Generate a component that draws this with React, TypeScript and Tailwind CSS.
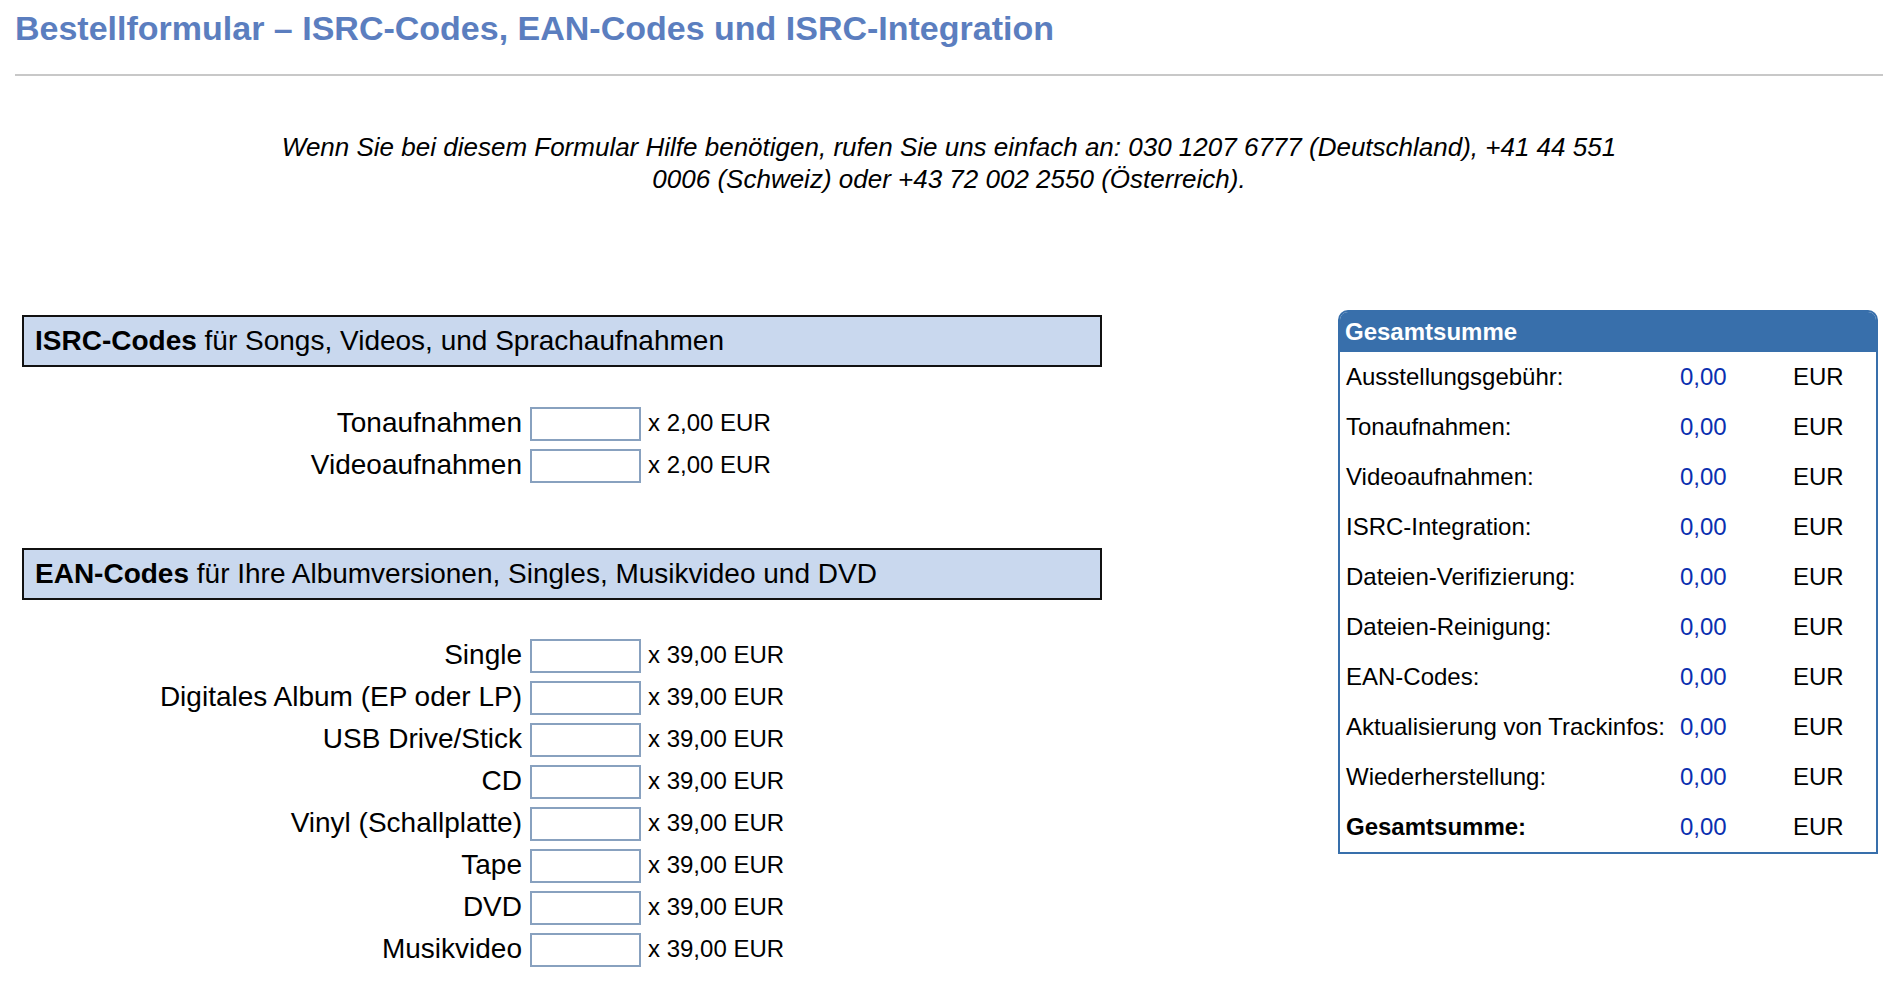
import React from 'react';

const isrcRows = [
  { label: 'Tonaufnahmen', price: '2,00' },
  { label: 'Videoaufnahmen', price: '2,00' },
];

const eanRows = [
  'Single',
  'Digitales Album (EP oder LP)',
  'USB Drive/Stick',
  'CD',
  'Vinyl (Schallplatte)',
  'Tape',
  'DVD',
  'Musikvideo',
];

const summaryRows = [
  'Ausstellungsgebühr:',
  'Tonaufnahmen:',
  'Videoaufnahmen:',
  'ISRC-Integration:',
  'Dateien-Verifizierung:',
  'Dateien-Reinigung:',
  'EAN-Codes:',
  'Aktualisierung von Trackinfos:',
  'Wiederherstellung:',
];

const SectionHeader = ({ bold, rest }: { bold: string; rest: string }) => (
  <div className="flex h-[52px] items-center border-2 border-[#111] bg-[#c9d8ee] pl-[11px] text-[28px] text-black">
    <span className="font-bold">{bold}</span>
    <span className="whitespace-pre"> {rest}</span>
  </div>
);

const QtyRow = ({ label, price }: { label: string; price: string }) => (
  <div className="flex h-[34px] items-center">
    <label className="w-[500px] pb-[3px] text-right text-[28px] leading-none text-black">{label}</label>
    <input
      type="text"
      className="ml-[8px] h-[34px] w-[111px] border-2 border-[#88a1bf] bg-white outline-none"
    />
    <span className="ml-[7px] pb-[3px] text-[24px] leading-none text-black">x {price} EUR</span>
  </div>
);

export default function App() {
  return (
    <div className="min-h-screen bg-white font-['Liberation_Sans',Arial,sans-serif] text-black">
      <h1 className="px-[15px] pt-[9px] text-[34px] font-bold leading-[39px] text-[#5b7ebf]">
        Bestellformular – ISRC-Codes, EAN-Codes und ISRC-Integration
      </h1>
      <div className="mx-[15px] mt-[26px] h-[2px] bg-[#c8c8c8]" />

      <p className="mx-auto mt-[55px] w-[1370px] text-center text-[26px] italic leading-[32px]">
        Wenn Sie bei diesem Formular Hilfe benötigen, rufen Sie uns einfach an: 030 1207 6777 (Deutschland), +41 44 551 0006 (Schweiz) oder +43 72 002 2550 (Österreich).
      </p>

      <div className="mt-[115px] flex items-start justify-between pl-[22px] pr-[20px]">
        {/* Bestellpositionen */}
        <div className="w-[1080px] pt-[5px]">
          <SectionHeader bold="ISRC-Codes" rest="für Songs, Videos, und Sprachaufnahmen" />
          <div className="mt-[40px] flex flex-col gap-[8px]">
            {isrcRows.map((r) => (
              <QtyRow key={r.label} label={r.label} price={r.price} />
            ))}
          </div>

          <div className="mt-[65px]">
            <SectionHeader bold="EAN-Codes" rest="für Ihre Albumversionen, Singles, Musikvideo und DVD" />
          </div>
          <div className="mt-[39px] flex flex-col gap-[8px]">
            {eanRows.map((label) => (
              <QtyRow key={label} label={label} price="39,00" />
            ))}
          </div>
        </div>

        {/* Gesamtsumme */}
        <div className="w-[540px] overflow-hidden rounded-t-[10px] border-2 border-[#386fab] text-[24px]">
          <div className="flex h-[40px] items-center bg-[#386fab] pl-[5px] font-bold text-white">
            Gesamtsumme
          </div>
          <div className="pl-[6px]">
            {summaryRows.map((label) => (
              <div key={label} className="grid h-[50px] grid-cols-[334px_113px_1fr] items-center">
                <span>{label}</span>
                <span className="text-[#0a2fb0]">0,00</span>
                <span>EUR</span>
              </div>
            ))}
            <div className="grid h-[50px] grid-cols-[334px_113px_1fr] items-center">
              <span className="font-bold">Gesamtsumme:</span>
              <span className="text-[#0a2fb0]">0,00</span>
              <span>EUR</span>
            </div>
          </div>
        </div>
      </div>
    </div>
  );
}
